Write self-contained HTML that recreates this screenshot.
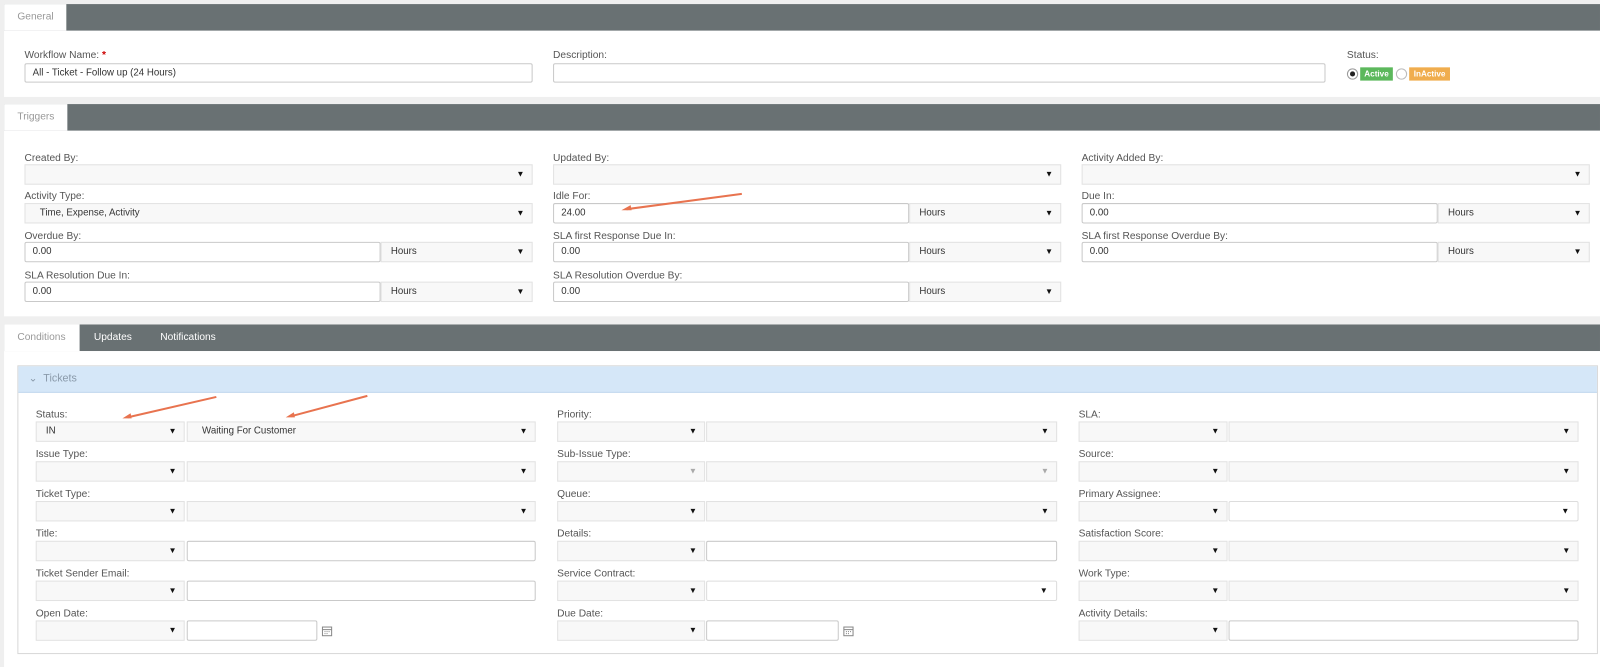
<!DOCTYPE html>
<html><head><meta charset="utf-8"><style>
*{box-sizing:border-box;margin:0;padding:0}
body{width:1600px;height:654px;background:#efefef;position:relative;overflow:hidden;font-family:"Liberation Sans",sans-serif;font-size:10px;color:#444}
#w{position:absolute;left:0;top:0;width:1568px;height:641px;transform:scale(1.0204);transform-origin:0 0}
#w div,#w span{position:absolute}
.p{background:#fff;left:4px;width:1564px}
.bar{background:#697173;height:26px;left:0;right:0;top:0}
.tab{background:#fff;height:26px;top:0;left:0;color:#999;font-size:10px;line-height:25px;padding-left:13px}
.tw{color:#fff;font-size:10px;top:7px}
.l{font-size:10px;color:#555;white-space:nowrap}
.s{background:#f8f8f8;border:1px solid #e2e2e2;height:20px;font-size:9.5px;line-height:18px;padding-left:9px;color:#333;white-space:nowrap}
.s:after{content:"\25BC";position:absolute;right:7px;top:0;font-size:8px;color:#111}
.g:after{color:#aaa}
.t{background:#fff;border:1px solid #c9c9c9;border-radius:2px;height:20px;font-size:9.5px;line-height:18px;padding-left:7px;color:#333;white-space:nowrap}
</style></head><body><div id="w">

<div class="p" style="top:4px;height:91px">
 <div class="bar"></div><div class="tab" style="width:61px">General</div>
 <span class="l" style="left:20px;top:45px">Workflow Name: <b style="color:#c00">*</b></span>
 <div class="t" style="left:20px;top:58px;width:498px;height:19px">All - Ticket - Follow up (24 Hours)</div>
 <span class="l" style="left:538px;top:45px">Description:</span>
 <div class="t" style="left:538px;top:58px;width:757px;height:19px"></div>
 <span class="l" style="left:1316px;top:45px">Status:</span>
 <span style="left:1316px;top:63px;width:11px;height:11px;border:1px solid #999;border-radius:50%;background:#fff"><span style="left:2px;top:2px;width:5px;height:5px;border-radius:50%;background:#222"></span></span>
 <span style="left:1329px;top:62px;width:32px;height:13px;background:#5cb85c;color:#fff;font-size:8px;font-weight:bold;line-height:13px;text-align:center">Active</span>
 <span style="left:1364px;top:63px;width:11px;height:11px;border:1px solid #bbb;border-radius:50%;background:#fff"></span>
 <span style="left:1377px;top:62px;width:40px;height:13px;background:#f0ad4e;color:#fff;font-size:8px;font-weight:bold;line-height:13px;text-align:center">InActive</span>
</div>

<div class="p" style="top:102px;height:208px">
 <div class="bar"></div><div class="tab" style="width:62px">Triggers</div>
 <span class="l" style="left:20px;top:48px">Created By:</span><div class="s" style="left:20px;top:59px;width:498px"></div>
 <span class="l" style="left:538px;top:48px">Updated By:</span><div class="s" style="left:538px;top:59px;width:498px"></div>
 <span class="l" style="left:1056px;top:48px">Activity Added By:</span><div class="s" style="left:1056px;top:59px;width:498px"></div>

 <span class="l" style="left:20px;top:85px">Activity Type:</span><div class="s" style="left:20px;top:97px;width:498px;padding-left:14px">Time, Expense, Activity</div>
 <span class="l" style="left:538px;top:85px">Idle For:</span><div class="t" style="left:538px;top:97px;width:349px">24.00</div><div class="s" style="left:887px;top:97px;width:149px">Hours</div>
 <span class="l" style="left:1056px;top:85px">Due In:</span><div class="t" style="left:1056px;top:97px;width:349px">0.00</div><div class="s" style="left:1405px;top:97px;width:149px">Hours</div>

 <span class="l" style="left:20px;top:124px">Overdue By:</span><div class="t" style="left:20px;top:135px;width:349px">0.00</div><div class="s" style="left:369px;top:135px;width:149px">Hours</div>
 <span class="l" style="left:538px;top:124px">SLA first Response Due In:</span><div class="t" style="left:538px;top:135px;width:349px">0.00</div><div class="s" style="left:887px;top:135px;width:149px">Hours</div>
 <span class="l" style="left:1056px;top:124px">SLA first Response Overdue By:</span><div class="t" style="left:1056px;top:135px;width:349px">0.00</div><div class="s" style="left:1405px;top:135px;width:149px">Hours</div>

 <span class="l" style="left:20px;top:163px">SLA Resolution Due In:</span><div class="t" style="left:20px;top:174px;width:349px">0.00</div><div class="s" style="left:369px;top:174px;width:149px">Hours</div>
 <span class="l" style="left:538px;top:163px">SLA Resolution Overdue By:</span><div class="t" style="left:538px;top:174px;width:349px">0.00</div><div class="s" style="left:887px;top:174px;width:149px">Hours</div>
</div>

<div class="p" style="top:318px;height:336px">
 <div class="bar"></div><div class="tab" style="width:74px">Conditions</div>
 <span class="tw" style="left:88px">Updates</span><span class="tw" style="left:153px">Notifications</span>
 <div style="left:13px;top:40px;width:1549px;height:283px;border:1px solid #d8d8d8;background:#fff">
  <div style="left:0;top:0;right:0;height:26px;background:#d5e7f8;border-bottom:1px solid #c4d9ee;color:#8a9aaa;font-size:10.5px;line-height:25px;padding-left:10px">&#8964;&nbsp; Tickets</div>
 </div>
</div>

<span class="l" style="left:35px;top:401px">Status:</span><div class="s" style="left:35px;top:413px;width:146px">IN</div><div class="s" style="left:183px;top:413px;width:342px;padding-left:14px">Waiting For Customer</div>
<span class="l" style="left:546px;top:401px">Priority:</span><div class="s" style="left:546px;top:413px;width:145px"></div><div class="s" style="left:692px;top:413px;width:344px"></div>
<span class="l" style="left:1057px;top:401px">SLA:</span><div class="s" style="left:1057px;top:413px;width:146px"></div><div class="s" style="left:1204px;top:413px;width:343px"></div>

<span class="l" style="left:35px;top:440px">Issue Type:</span><div class="s" style="left:35px;top:452px;width:146px"></div><div class="s" style="left:183px;top:452px;width:342px"></div>
<span class="l" style="left:546px;top:440px">Sub-Issue Type:</span><div class="s g" style="left:546px;top:452px;width:145px"></div><div class="s g" style="left:692px;top:452px;width:344px"></div>
<span class="l" style="left:1057px;top:440px">Source:</span><div class="s" style="left:1057px;top:452px;width:146px"></div><div class="s" style="left:1204px;top:452px;width:343px"></div>

<span class="l" style="left:35px;top:479px">Ticket Type:</span><div class="s" style="left:35px;top:491px;width:146px"></div><div class="s" style="left:183px;top:491px;width:342px"></div>
<span class="l" style="left:546px;top:479px">Queue:</span><div class="s" style="left:546px;top:491px;width:145px"></div><div class="s" style="left:692px;top:491px;width:344px"></div>
<span class="l" style="left:1057px;top:479px">Primary Assignee:</span><div class="s" style="left:1057px;top:491px;width:146px"></div><div class="t" style="left:1204px;top:491px;width:343px;border-color:#ddd"></div><span style="left:1530px;top:491px;font-size:8px;line-height:19px;color:#111">&#9660;</span>

<span class="l" style="left:35px;top:518px">Title:</span><div class="s" style="left:35px;top:530px;width:146px"></div><div class="t" style="left:183px;top:530px;width:342px"></div>
<span class="l" style="left:546px;top:518px">Details:</span><div class="s" style="left:546px;top:530px;width:145px"></div><div class="t" style="left:692px;top:530px;width:344px"></div>
<span class="l" style="left:1057px;top:518px">Satisfaction Score:</span><div class="s" style="left:1057px;top:530px;width:146px"></div><div class="s" style="left:1204px;top:530px;width:343px"></div>

<span class="l" style="left:35px;top:557px">Ticket Sender Email:</span><div class="s" style="left:35px;top:569px;width:146px"></div><div class="t" style="left:183px;top:569px;width:342px"></div>
<span class="l" style="left:546px;top:557px">Service Contract:</span><div class="s" style="left:546px;top:569px;width:145px"></div><div class="t" style="left:692px;top:569px;width:344px;border-color:#ddd"></div><span style="left:1019px;top:569px;font-size:8px;line-height:19px;color:#111">&#9660;</span>
<span class="l" style="left:1057px;top:557px">Work Type:</span><div class="s" style="left:1057px;top:569px;width:146px"></div><div class="s" style="left:1204px;top:569px;width:343px"></div>

<span class="l" style="left:35px;top:596px">Open Date:</span><div class="s" style="left:35px;top:608px;width:146px"></div><div class="t" style="left:183px;top:608px;width:128px"></div>
<svg style="position:absolute;left:315px;top:613px" width="11" height="11"><rect x="1" y="1.5" width="9" height="8.5" fill="none" stroke="#888"/><path d="M1 4h9M3 6h1M5 6h1M7 6h1M3 8h1M5 8h1" stroke="#888"/></svg>
<span class="l" style="left:546px;top:596px">Due Date:</span><div class="s" style="left:546px;top:608px;width:145px"></div><div class="t" style="left:692px;top:608px;width:130px"></div>
<svg style="position:absolute;left:826px;top:613px" width="11" height="11"><rect x="1" y="1.5" width="9" height="8.5" fill="none" stroke="#888"/><path d="M1 4h9M3 6h1M5 6h1M7 6h1M3 8h1M5 8h1" stroke="#888"/></svg>
<span class="l" style="left:1057px;top:596px">Activity Details:</span><div class="s" style="left:1057px;top:608px;width:146px"></div><div class="t" style="left:1204px;top:608px;width:343px"></div>

<svg style="position:absolute;left:0;top:0" width="1568" height="641">
 <path d="M727 190L614 205" stroke="#e8734f" stroke-width="2"/>
 <path d="M609 206l9-5l1 5z" fill="#e8734f"/>
 <path d="M212 389L125 409" stroke="#e8734f" stroke-width="2"/>
 <path d="M120 410l8-5l1 5z" fill="#e8734f"/>
 <path d="M360 388L285 408" stroke="#e8734f" stroke-width="2"/>
 <path d="M280 409l8-5l1 5z" fill="#e8734f"/>
</svg>
</div></body></html>
